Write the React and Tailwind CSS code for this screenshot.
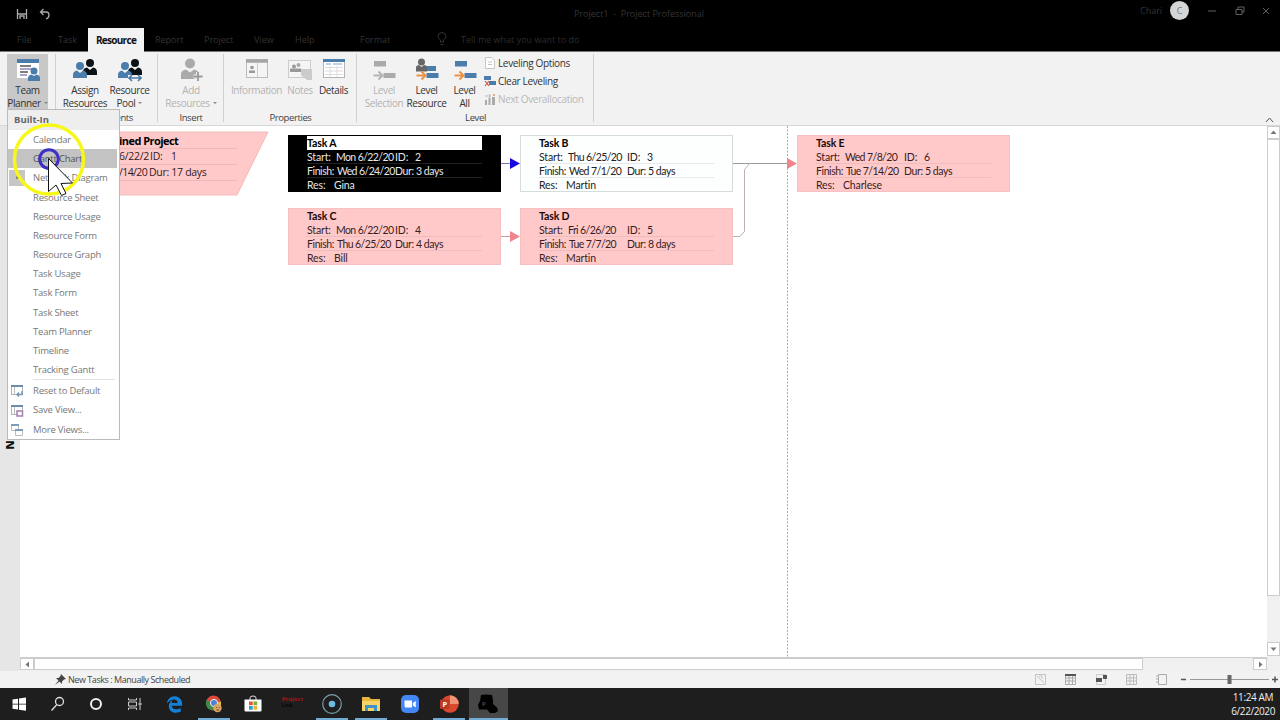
import React from 'react';
import { FaEdgeLegacy } from 'react-icons/fa6';

const BLUE = '#4a7dab';

const VIEWS = [
    'Calendar',
    'Gantt Chart',
    'Network Diagram',
    'Resource Sheet',
    'Resource Usage',
    'Resource Form',
    'Resource Graph',
    'Task Usage',
    'Task Form',
    'Task Sheet',
    'Team Planner',
    'Timeline',
    'Tracking Gantt',
];

const TASKS = [
    { name: 'Task A', start: 'Mon 6/22/20', finish: 'Wed 6/24/20', id: 2, dur: '3 days', res: 'Gina', place: 'left-[268px] top-[9px]', look: 'selected' },
    { name: 'Task B', start: 'Thu 6/25/20', finish: 'Wed 7/1/20', id: 3, dur: '5 days', res: 'Martin', place: 'left-[500px] top-[9px]', look: 'plain' },
    { name: 'Task C', start: 'Mon 6/22/20', finish: 'Thu 6/25/20', id: 4, dur: '4 days', res: 'Bill', place: 'left-[268px] top-[82px]', look: 'critical' },
    { name: 'Task D', start: 'Fri 6/26/20', finish: 'Tue 7/7/20', id: 5, dur: '8 days', res: 'Martin', place: 'left-[500px] top-[82px]', look: 'critical' },
    { name: 'Task E', start: 'Wed 7/8/20', finish: 'Tue 7/14/20', id: 6, dur: '5 days', res: 'Charlese', place: 'left-[777px] top-[9px]', look: 'critical' },
];

const LOOKS = {
    selected: { box: 'bg-black border-black text-gray-200', line: 'border-[#222]', name: 'bg-white text-black' },
    plain: { box: 'bg-[#fdfefe] border-[#d5dcdc] text-[#222]', line: 'border-[#e6e9e9]', name: 'text-black' },
    critical: { box: 'bg-[#ffc9c9] border-[#f8c0c0] text-[#3a1c1c]', line: 'border-[#edbcbc]', name: 'text-[#1c0808]' },
};

/* ---------- icons ---------- */

function Person({ x = 0, y = 0, fill }) {
    return (
        <g transform={`translate(${x} ${y})`} fill={fill}>
            <circle cx="7" cy="4" r="4" />
            <path d="M0 16v-3q0-4 4-4.500l3 2.500 3-2.500q4 .5 4 4.500v3z" />
        </g>
    );
}

function TeamPlannerIcon() {
    return (
        <svg width="26" height="24" viewBox="0 0 26 24">
            <rect x="2" y="1" width="22" height="19" fill="#fff" />
            <rect x="2" y="1" width="22" height="4" fill={BLUE} />
            <path d="M5 8h11M5 14h8" stroke="#555" strokeWidth="1.300" />
            <path d="M5 11h12M5 17h7" stroke="#8f86bd" strokeWidth="1.500" />
            <circle cx="19" cy="13" r="3.500" fill={BLUE} />
            <path d="M13 23v-3q0-3 3.500-3.500l2.500 1.500 2.500-1.500q3.500 .5 3.500 3.500v3z" fill={BLUE} />
        </svg>
    );
}

function AssignIcon({ pool }) {
    return (
        <svg width="26" height="24" viewBox="0 0 26 24">
            <Person x={11} y={1} fill="#0c1216" />
            <Person x={1} y={4} fill={BLUE} />
            {pool && (
                <>
                    <path d="M11 17h14v6H11z" fill="#f2f2f2" />
                    <path d="M12 20h12M15 17l-3 3 3 3M21 17l3 3-3 3" fill="none" stroke={BLUE} strokeWidth="1.700" />
                </>
            )}
        </svg>
    );
}

function AddIcon() {
    return (
        <svg width="26" height="24" viewBox="0 0 26 24">
            <circle cx="12" cy="5.500" r="5" fill="#aaa" />
            <path d="M3 21v-5q0-3.500 5-4.500l4 3 4-3q5 1 5 4.500v5z" fill="#aaa" />
            <path d="M20 14v9M15.500 18.500h9" stroke="#f2f2f2" strokeWidth="4" />
            <path d="M20 14v9M15.500 18.500h9" stroke="#999" strokeWidth="1.800" />
        </svg>
    );
}

function InformationIcon() {
    return (
        <svg width="24" height="24" viewBox="0 0 24 24">
            <rect x="1.500" y="1.500" width="21" height="18" fill="#f5f5f5" stroke="#bbb" />
            <path d="M1 3h22" stroke="#a5a5a5" strokeWidth="3.500" />
            <path d="M12.500 5v14" stroke="#ccc" />
            <circle cx="7" cy="9.500" r="1.800" fill="#999" />
            <path d="M4 15v-2.500h6V15z" fill="#999" />
        </svg>
    );
}

function NotesIcon() {
    return (
        <svg width="26" height="24" viewBox="0 0 26 24">
            <rect x="1.500" y="2.500" width="22" height="17" fill="#f5f5f5" stroke="#ccc" />
            <circle cx="7" cy="8.500" r="2" fill="#999" />
            <circle cx="11.500" cy="7" r="2" fill="#aaa" />
            <path d="M3 14v-3.500h11V14z" fill="#999" />
            <path d="M14 11h11v11h-5l-6-5z" fill="#cbcbcb" />
        </svg>
    );
}

function DetailsIcon() {
    return (
        <svg width="24" height="24" viewBox="0 0 24 24">
            <rect x="1.500" y="1.500" width="21" height="18" fill="#fff" stroke="#b5b5b5" />
            <path d="M1 2.500h22" stroke={BLUE} strokeWidth="3" />
            <path d="M4 6h5M11 6h9" stroke="#7fa5c8" />
            <path d="M3 9.500h18M3 13h18M3 16.500h18M8 8v11M15 8v11" stroke="#ddd" />
        </svg>
    );
}

function LevelIcon({ person, color = BLUE, arrow = '#ec9243' }) {
    return (
        <svg width="24" height="24" viewBox="0 0 24 24">
            {person ? (
                <>
                    <rect x="10" y="8" width="11" height="5" fill={color} />
                    <circle cx="6.500" cy="4" r="3.500" fill="#666" />
                    <path d="M1 13.500v-4q0-2 3-2.500l2.500 2L9 7q3 .5 3 2.500v4z" fill="#666" />
                </>
            ) : (
                <rect x="2" y="3" width="12" height="5.500" fill={color} />
            )}
            <rect x="11.500" y="15" width="12" height="5" fill={color} />
            <path d="M1.500 17.500h8M6.500 13.500l4 4-4 4" fill="none" stroke={arrow} strokeWidth="2" />
        </svg>
    );
}

function ViewIcon({ kind }) {
    return (
        <svg width="14" height="14" viewBox="0 0 14 14" className="shrink-0">
            {kind === 'more' ? (
                <>
                    <path d="M1.500 1.500h7v6h-7zM5.500 6.500h7v6h-7z" fill="#fff" stroke="#b5bcc4" />
                    <path d="M1 2h8M5 7h8" stroke="#7f9db9" strokeWidth="2" />
                </>
            ) : (
                <>
                    <rect x="1.500" y="1.500" width="11" height="9" fill="#fff" stroke="#a9b4c0" />
                    <path d="M1 2h12" stroke="#6d8cad" strokeWidth="2" />
                    <path d="M4.500 3v8" stroke="#bbb" />
                    {kind === 'save' ? (
                        <path d="M7 7h5.500v5H7z" fill="#fff" stroke="#a57fae" strokeWidth="1.500" />
                    ) : (
                        <path d="M12 7v3.500H7M9 8.500l-2 2 2 2" fill="none" stroke="#7595b5" strokeWidth="1.400" />
                    )}
                </>
            )}
        </svg>
    );
}

/* ---------- title bar and ribbon ---------- */

function TitleBar() {
    return (
        <div className="flex h-[26px] items-center bg-black text-[9px] text-[#343434]">
            <div className="flex w-[574px] items-center gap-[11px] pl-4 pt-px">
                <svg width="12" height="12" viewBox="0 0 12 12" fill="none" stroke="#aaa" strokeWidth="1.300">
                    <path d="M1.500 1v10M10.500 1v10M2 6h8M4 11V8h4v3" />
                </svg>
                <svg width="12" height="12" viewBox="0 0 12 12" fill="none" stroke="#aaa" strokeWidth="1.300">
                    <path d="M4.500 1L1.500 4l3 3M2 4h5q3 0 3 3t-3 4" />
                </svg>
            </div>
            <span className="w-[566px] pt-px">Project1&nbsp; -&nbsp; Project Professional</span>
            <span className="mb-1 w-[30px]">Chari</span>
            <span className="mb-[5px] flex size-[19px] items-center justify-center rounded-full bg-[#d5d5d5] text-[9px] text-[#777]">C</span>
            <svg width="68" height="12" viewBox="0 0 68 12" className="mb-1 ml-[17px]" fill="none" stroke="#606060">
                <path d="M2 6h8M30 4.500h6v5h-6zM32 4V2h6v5h-2M57 3l6 6M63 3l-6 6" />
            </svg>
        </div>
    );
}

function Tabs() {
    return (
        <div className="flex h-[26px] border-b border-[#777] bg-black text-[9px] leading-[28px] text-[#333]">
            <span className="w-[43px] pl-[17px]">File</span>
            <span className="w-[45px] pl-[15px]">Task</span>
            <span className="-mb-px mt-[2px] w-[56px] bg-[#f2f2f2] text-center text-[10px] font-bold leading-[24px] tracking-[-0.7px] text-[#111]">Resource</span>
            <span className="w-[60px] pl-[11px]">Report</span>
            <span className="w-[50px]">Project</span>
            <span className="w-[41px]">View</span>
            <span className="w-[65px]">Help</span>
            <span className="w-[76px]">Format</span>
            <svg width="10" height="14" viewBox="0 0 10 14" className="ml-px mt-[6px]" fill="none" stroke="#333">
                <path d="M3.500 10V8Q1 6.500 1 4.500a4 4 0 018 0q0 2-2.500 3.500v2zM3.500 12.500h3" />
            </svg>
            <span className="ml-[14px] text-[#2c2c2c]">Tell me what you want to do</span>
        </div>
    );
}

function RibbonButton({ icon, lines, className = '', disabled, menu }) {
    return (
        <div className={`flex flex-col items-center pt-1 text-center leading-[13px] ${disabled ? 'text-[#b3b3b3]' : 'text-[#333]'} ${className}`}>
            <div className="flex h-[27px] items-start pt-px">{icon}</div>
            {lines.map((line, i) => (
                <div key={line} className="whitespace-nowrap">
                    {line}
                    {menu && i === lines.length - 1 && <span className="ml-[3px] inline-block border-x-2 border-t-2 border-x-transparent border-t-[#888] align-[3px]" />}
                </div>
            ))}
        </div>
    );
}

function RibbonGroup({ label, className, bodyClass = '', children }) {
    return (
        <div className={`relative flex flex-col py-px ${className}`}>
            <div className={`flex h-[60px] ${bodyClass}`}>{children}</div>
            <div className="text-center text-[9.5px] leading-[13px] tracking-[-0.4px] text-[#444]">{label}</div>
            <div className="absolute bottom-[3px] right-0 top-[2px] w-px bg-[#d0d0d0]" />
        </div>
    );
}

function Ribbon() {
    return (
        <div className="flex h-[74px] border-b border-[#d8d8d8] bg-[#f2f2f2] text-[10px] tracking-[-0.4px]">
            <RibbonGroup className="w-[56px]" bodyClass="pl-[7px]" label="">
                <RibbonButton className="mt-px w-[41px] bg-[#c8c8c8] !pt-[3px]" icon={<TeamPlannerIcon />} lines={['Team', 'Planner']} menu />
            </RibbonGroup>
            <RibbonGroup className="w-[102px]" bodyClass="pl-[7px]" label="Assignments">
                <RibbonButton className="w-[44px]" icon={<AssignIcon />} lines={['Assign', 'Resources']} />
                <RibbonButton className="w-[45px]" icon={<AssignIcon pool />} lines={['Resource', 'Pool']} menu />
            </RibbonGroup>
            <RibbonGroup className="w-[66px]" label="Insert">
                <RibbonButton className="w-full" icon={<AddIcon />} lines={['Add', 'Resources']} disabled menu />
            </RibbonGroup>
            <RibbonGroup className="w-[133px]" bodyClass="pl-[5px]" label="Properties">
                <RibbonButton className="w-[55px]" icon={<InformationIcon />} lines={['Information']} disabled />
                <RibbonButton className="w-[32px]" icon={<NotesIcon />} lines={['Notes']} disabled />
                <RibbonButton className="w-[35px]" icon={<DetailsIcon />} lines={['Details']} />
            </RibbonGroup>
            <RibbonGroup className="w-[237px]" bodyClass="pl-[6px]" label="Level">
                <RibbonButton className="w-[42px]" icon={<LevelIcon color="#aaa" arrow="#b5b5b5" />} lines={['Level', 'Selection']} disabled />
                <RibbonButton className="w-[43px]" icon={<LevelIcon person />} lines={['Level', 'Resource']} />
                <RibbonButton className="w-[33px]" icon={<LevelIcon />} lines={['Level', 'All']} />
                <div className="flex flex-col pl-[3px] pt-px tracking-[-0.35px] text-[#333]">
                    <div className="flex h-[18px] items-center gap-[2px]">
                        <svg width="12" height="14" viewBox="0 0 12 14" fill="#fff" stroke="#c5c5c5"><path d="M1.500 1.500h6l3 3v8h-9zM4 6h4M4 8.500h4" /></svg>
                        Leveling Options
                    </div>
                    <div className="flex h-[18px] items-center gap-[2px]">
                        <svg width="12" height="12" viewBox="0 0 12 12">
                            <path d="M0 1h7v4H0zM5 6h7v4H5z" fill={BLUE} />
                            <path d="M1 6l4 5M5 6l-4 5" stroke="#cf5740" strokeWidth="1.200" />
                        </svg>
                        Clear Leveling
                    </div>
                    <div className="flex h-[18px] items-center gap-[2px] text-[#b8b8b8]">
                        <svg width="12" height="13" viewBox="0 0 12 13">
                            <path d="M1 7h2v5H1zM4.500 5h2v7h-2zM8 4h3v8H8z" fill="#aaa" />
                            <path d="M1 3h6M5 1l2 2-2 2" fill="none" stroke="#bbb" />
                            <path d="M9 1h2v2H9z" fill="#e3a987" />
                        </svg>
                        Next Overallocation
                    </div>
                </div>
            </RibbonGroup>
            <div className="flex grow items-end justify-end pb-[2px] pr-[6px]">
                <svg width="9" height="6" viewBox="0 0 9 6" fill="none" stroke="#555"><path d="M1 5l3.500-4L8 5" /></svg>
            </div>
        </div>
    );
}

/* ---------- network diagram ---------- */

function TaskBox({ task }) {
    const look = LOOKS[task.look];
    return (
        <div className={`absolute h-[57px] w-[213px] border pl-[18px] font-['Lato','Carlito',sans-serif] text-[10.5px] leading-[14px] tracking-[-0.15px] ${look.box} ${task.place}`}>
            <div className={`h-[14px] w-[175px] font-bold ${look.name}`}>{task.name}</div>
            <div className={`flex h-[14px] w-[175px] border-b ${look.line}`}>
                <span className="w-[29px]">Start:</span>
                <span className="w-[59px] whitespace-nowrap tracking-[-0.6px]">{task.start}</span>
                <span className="w-[20px]">ID:</span>
                <span>{task.id}</span>
            </div>
            <div className={`flex h-[14px] w-[175px] border-b ${look.line}`}>
                <span className="w-[30px] tracking-[-0.4px]">Finish:</span>
                <span className="w-[58px] whitespace-nowrap tracking-[-0.6px]">{task.finish}</span>
                <span className="tracking-[-0.4px]">Dur: {task.dur}</span>
            </div>
            <div className="flex h-[13px]">
                <span className="w-[27px]">Res:</span>
                <span>{task.res}</span>
            </div>
        </div>
    );
}

function Diagram() {
    return (
        <div className="relative grow overflow-hidden bg-white">
            <svg width="1246" height="531" className="absolute inset-0" fill="none">
                <path d="M60 6h188l-31 63H60z" fill="#ffc9c9" stroke="#f3bcbc" />
                <path d="M100 22.500h117M100 38.500h117M100 54.500h117" stroke="#efb9b9" />
                <path d="M767.500 0v531" stroke="#aaa" strokeDasharray="2 1.500" />
                <path d="M481 37.500h10" stroke="#77b" />
                <path d="M490 32l10 5.500-10 5.500z" fill="#1607e0" />
                <path d="M481 110.500h10" stroke="#c99" />
                <path d="M490 105l10 5.500-10 5.500z" fill="#f0838c" />
                <path d="M713 37.500h55" stroke="#999" />
                <path d="M713 110.500h7l4.500-5v-62l5-6" stroke="#c0b0b0" />
                <path d="M767 32l10 5.500-10 5.500z" fill="#f0838c" />
            </svg>
            <div className="absolute left-[99px] top-[7px] text-[10.5px] leading-4 tracking-[-0.3px] text-[#33191c]">
                <div className="h-[15px] text-[11px] font-bold tracking-[-0.55px] text-black">ined Project</div>
                <div className="flex">
                    <span className="w-[31px] whitespace-nowrap">6/22/2</span>
                    <span className="w-[21px]">ID:</span>
                    <span>1</span>
                </div>
                <div className="flex">
                    <span className="w-[30px] whitespace-nowrap tracking-[-0.6px]">/14/20</span>
                    <span>Dur: 17 days</span>
                </div>
            </div>
            {TASKS.map((task) => (
                <TaskBox key={task.name} task={task} />
            ))}
        </div>
    );
}

function ScrollButton({ className, path }) {
    return (
        <div className={`flex items-center justify-center border border-[#ccc] bg-white ${className}`}>
            <svg width="7" height="7" viewBox="0 0 7 7" fill="#777"><path d={path} /></svg>
        </div>
    );
}

function Workspace() {
    return (
        <div className="flex h-[545px] bg-[#f0f0f0]">
            <div className="flex w-5 shrink-0 items-start justify-center bg-[#e6e6e6] pt-[312px]">
                <span className="-rotate-90 text-[11px] font-black leading-[14px] text-[#111]">N</span>
            </div>
            <div className="flex w-[1247px] flex-col">
                <Diagram />
                <div className="flex h-[14px] border-t border-[#ccc] pb-px">
                    <ScrollButton className="w-[14px]" path="M5 .5v6L1.500 3.500z" />
                    <div className="w-[1109px] border border-[#ccc] bg-white" />
                    <div className="grow" />
                    <ScrollButton className="w-[14px]" path="M2 .5v6l3.500-3z" />
                </div>
            </div>
            <div className="flex w-[13px] flex-col pb-[15px]">
                <ScrollButton className="h-[13px]" path="M.5 5h6l-3-3.500z" />
                <div className="h-[457px] border border-[#ccc] bg-white" />
                <div className="grow" />
                <ScrollButton className="h-[14px]" path="M.5 1.500h6l-3 3.500z" />
            </div>
        </div>
    );
}

function ViewsMenu() {
    return (
        <div className="absolute left-[7px] top-[109px] h-[331px] w-[113px] border border-[#bbb] bg-white text-[9.5px] tracking-[-0.22px] text-[#777]">
            <div className="h-[20px] bg-[#eee] pl-[6px] font-bold leading-[20px] tracking-[0px] text-[#666]">Built-In</div>
            {VIEWS.map((view) => (
                <div
                    key={view}
                    className={`flex h-[19.2px] items-center whitespace-nowrap ${view === 'Gantt Chart' ? 'mr-[2px] bg-[#c3c3c3] text-[#555]' : ''}`}
                >
                    <div className="w-[25px] shrink-0">
                        {view === 'Network Diagram' && (
                            <div className="ml-px flex size-[16px] items-center justify-center bg-[#c6c6c6]">
                                <span className="size-[3px] rounded-full bg-[#777]" />
                            </div>
                        )}
                    </div>
                    <span className="pt-px">{view}</span>
                </div>
            ))}
            <div className="mb-px ml-[25px] mr-1 h-px bg-[#e2e2e2]" />
            {[['reset', 'Reset to Default'], ['save', 'Save View...'], ['more', 'More Views...']].map(([kind, label]) => (
                <div key={kind} className="flex h-[19.4px] items-center whitespace-nowrap">
                    <div className="w-[25px] shrink-0 pl-[2px]">
                        <ViewIcon kind={kind} />
                    </div>
                    {label}
                </div>
            ))}
        </div>
    );
}

// Click ring and mouse pointer
function Pointer() {
    return (
        <svg width="90" height="100" viewBox="0 0 90 100" className="absolute left-0 top-[110px]">
            <circle cx="49" cy="49.500" r="34.500" fill="none" stroke="#f7f71a" strokeWidth="3.500" />
            <circle cx="49" cy="49" r="9.300" fill="none" stroke="#3d2fc4" strokeWidth="3" />
            <path d="M48.500 48.500v33l7.500-6.500 5.500 10.500 4.500-2-5-10 11.500-.5z" fill="#fff" stroke="#111" />
        </svg>
    );
}

function StatusBar() {
    return (
        <div className="flex h-[17px] items-center bg-[#f2f2f2] text-[9px] tracking-[-0.45px] text-[#444]">
            <svg width="11" height="11" viewBox="0 0 11 11" className="ml-[55px]" fill="#444">
                <path d="M6 0l5 5-2 .5-2 2 0 2.500L4.500 7.500 0 11l3.500-4.500L1 4h2.500l2-2z" />
            </svg>
            <span className="ml-[2px] grow pt-px">New Tasks : Manually Scheduled</span>
            <svg width="246" height="17" viewBox="0 0 246 17" fill="none">
                <path d="M1.500 3.500h10v10h-10zM3 5l7 7M5 5h3v3" stroke="#c4c4c4" />
                <path d="M31.500 3.500h10v10h-10zM31 7h11M31 10h11M35 5v8M38.500 5v8" stroke="#aaa" />
                <path d="M31 4h11" stroke="#555" strokeWidth="2" />
                <path d="M62.500 3.500h9v10h-9z" stroke="#ccc" />
                <path d="M62 7h6v4h-6zM69 4h4v4h-4z" fill="#555" />
                <path d="M92.500 3.500h10v10h-10zM92 7h11M92 10h11M96 4v9M99.500 4v9" stroke="#bbb" />
                <path d="M124.500 3.500h8v10h-8zM122 5h3M122 8h3M122 11h3" stroke="#aaa" />
                <path d="M147 8.500h5M238 8.500h6M241 5.500v6" stroke="#555" strokeWidth="1.500" />
                <path d="M156 8.500h79" stroke="#999" />
                <path d="M193.500 4h4v9h-4z" fill="#666" />
            </svg>
        </div>
    );
}

/* ---------- taskbar ---------- */

const APPS = [
    { id: 'start', icon: <path d="M4.500 5.500l5.500-.8v5H4.500zM11 4.500l7-1v6.200h-7zM4.500 10.600H10v5l-5.500-.8zM11 10.600h7v6.200l-7-1z" fill="#fff" /> },
    { id: 'search', icon: <path d="M9.500 11l-5 5.500M16.500 7.500a4 4 0 11-8 0 4 4 0 018 0z" fill="none" stroke="#ddd" strokeWidth="1.300" /> },
    { id: 'cortana', icon: <circle cx="10" cy="10" r="5" fill="none" stroke="#eee" strokeWidth="2" /> },
    { id: 'taskview', icon: <path d="M2.500 4v2h8V4M2.500 16v-2h8v2M2.500 8h8v4h-8zM14 4v4M14 12v4M13 9h2v2h-2z" fill="none" stroke="#ccc" /> },
    { id: 'edge', icon: null },
    {
        id: 'chrome',
        running: true,
        icon: (
            <>
                <circle cx="9.500" cy="9" r="7.500" fill="#d94b3a" />
                <path d="M2.500 6a7.500 7.500 0 006 10.500L10 10z" fill="#3c8b4c" />
                <path d="M10 16.500a7.500 7.500 0 007-9l-7 2z" fill="#e8bf3c" />
                <circle cx="10" cy="9" r="3.600" fill="#4b82d5" stroke="#eee" />
                <circle cx="13.500" cy="14" r="4.200" fill="#dba665" />
                <path d="M12 13.500h.8M14.800 13.500h.8M12.500 16h2.500" stroke="#5b3820" />
            </>
        ),
    },
    {
        id: 'store',
        icon: (
            <>
                <path d="M7 6V4q0-2 3-2t3 2v2" fill="none" stroke="#ddd" />
                <path d="M1.500 5.500h17v11q0 1-1 1h-15q-1 0-1-1z" fill="#fff" />
                <path d="M6 7.500h3.700v3.700H6z" fill="#e4532d" />
                <path d="M10.500 7.500h3.700v3.700h-3.700z" fill="#7cae32" />
                <path d="M6 12h3.700v3.700H6z" fill="#2d9bd8" />
                <path d="M10.500 12h3.700v3.700h-3.700z" fill="#efb42a" />
            </>
        ),
    },
    { id: 'project-link', icon: null },
    {
        id: 'recorder',
        running: true,
        icon: (
            <>
                <circle cx="10" cy="10" r="9.300" fill="none" stroke="#7ba0ab" strokeWidth="1.200" />
                <circle cx="10" cy="10" r="3.300" fill="#6fbbe0" />
            </>
        ),
    },
    {
        id: 'explorer',
        running: true,
        icon: (
            <>
                <path d="M1 3h7l2 2h9v12H1z" fill="#e9b53c" />
                <path d="M1 7h18v10H1z" fill="#f7d265" />
                <path d="M4 17v-6h12v6h-3v-3H7v3z" fill="#3f93c7" />
            </>
        ),
    },
    {
        id: 'zoom',
        icon: (
            <>
                <rect x="1" y="1" width="18" height="18" rx="5" fill="#4486f2" />
                <path d="M4.500 6.500h7.500v7H6q-1.500 0-1.500-1.500zM12.800 9l3-2v6.500l-3-2z" fill="#fff" />
            </>
        ),
    },
    {
        id: 'powerpoint',
        running: true,
        icon: (
            <>
                <circle cx="11" cy="10" r="8.700" fill="#d8492f" />
                <path d="M11 1.300a8.700 8.700 0 018.700 8.700H11z" fill="#f29275" />
                <rect x="1" y="5.500" width="9.500" height="9.500" rx="1" fill="#b93a20" />
                <text x="3.500" y="13" fill="#fff" fontSize="7.500" fontWeight="bold">P</text>
            </>
        ),
    },
    {
        id: 'project',
        running: true,
        active: true,
        icon: (
            <>
                <path d="M3 1q5-1 11 0l1 5v4l4 3.500 1 3.500-3 2h-5l-3-3.500H1L0 11l2-4z" fill="#000" />
                <text x="4" y="12" fill="#444" fontSize="6" fontWeight="bold">P</text>
            </>
        ),
    },
];

function Taskbar() {
    return (
        <div className="flex h-[32px] bg-[#1e1e1e]">
            <div className="-ml-[1.5px] flex">
                {APPS.map((app) => (
                    <div key={app.id} className={`relative flex w-[39.2px] items-center justify-center ${app.active ? 'bg-[#474747]' : ''}`}>
                        {app.id === 'edge' && <FaEdgeLegacy size={17} color="#1580d8" />}
                        {app.id === 'project-link' && (
                            <div className="pb-1 text-[6px] font-bold leading-[6px] text-[#a51515]">
                                Project
                                <div className="text-[5px] text-[#050505]">Link</div>
                            </div>
                        )}
                        {app.icon && <svg width="20" height="20" viewBox="0 0 20 20">{app.icon}</svg>}
                        {app.running && <div className={`absolute bottom-0 h-[2px] bg-[#71acd5] ${app.active ? 'w-full' : 'w-8'}`} />}
                    </div>
                ))}
            </div>
            <div className="grow pr-[5px] pt-[2px] text-right text-[10px] leading-[14px] tracking-[-0.4px] text-[#eee]">
                <div className="pr-[2px]">11:24 AM</div>
                <div>6/22/2020</div>
            </div>
        </div>
    );
}

export default function App() {
    return (
        <div className="relative h-[720px] w-[1280px] overflow-hidden bg-white font-['Open_Sans','Noto_Sans',sans-serif]">
            <TitleBar />
            <Tabs />
            <Ribbon />
            <Workspace />
            <StatusBar />
            <Taskbar />
            <ViewsMenu />
            <Pointer />
        </div>
    );
}
